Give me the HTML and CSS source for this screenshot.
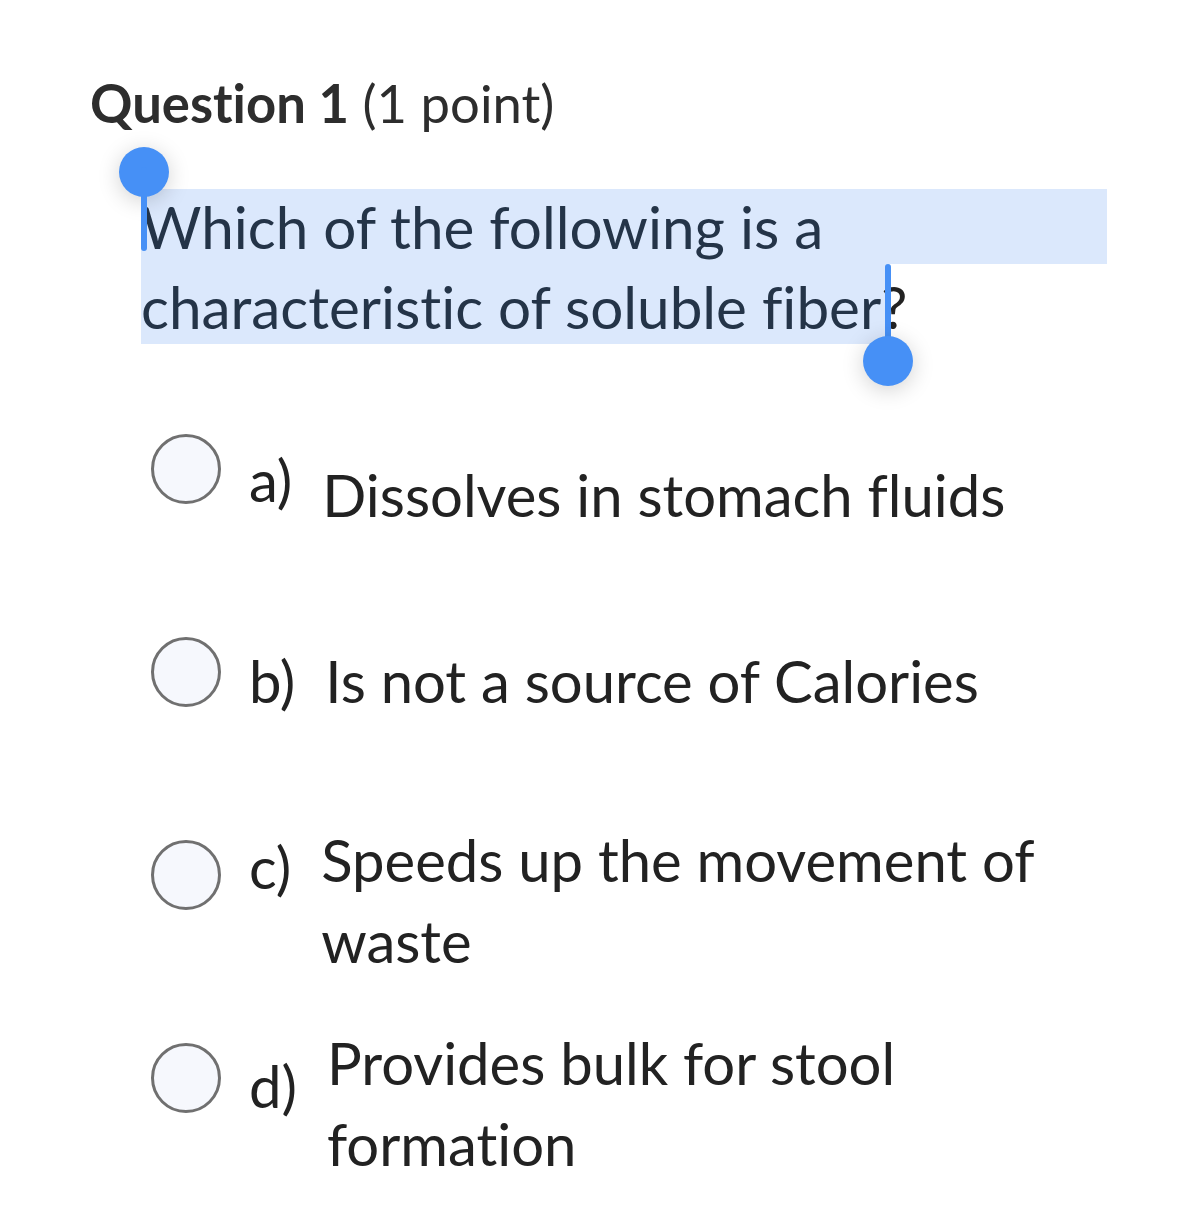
FILE: index.html
```html
<!DOCTYPE html>
<html lang="en">
<head>
<meta charset="utf-8">
<title>Question 1</title>
<link rel="stylesheet" href="styles.css">
</head>
<body>
<main class="quiz">
  <h1 class="q-title"><strong>Question 1</strong> (1 point)</h1>
  <div class="q-text"><span class="handle handle-start"><span class="knob"></span><span class="stem"></span></span><span class="sel">Which of the following is a characteristic of soluble fiber</span>?<span class="handle handle-end"><span class="stem"></span><span class="knob"></span></span></div>
  <ul class="options">
    <li class="option option-a"><span class="radio"></span><span class="label">a)</span><span class="text">Dissolves in stomach fluids</span></li>
    <li class="option option-b"><span class="radio"></span><span class="label">b)</span><span class="text">Is not a source of Calories</span></li>
    <li class="option option-c"><span class="radio"></span><span class="label">c)</span><span class="text">Speeds up the movement of waste</span></li>
    <li class="option option-d"><span class="radio"></span><span class="label">d)</span><span class="text">Provides bulk for stool formation</span></li>
  </ul>
</main>
</body>
</html>
```
FILE: styles.css
```css
html, body {
  margin: 0;
  padding: 0;
  background: #ffffff;
}
body {
  font-family: Lato, "Noto Sans", sans-serif;
  color: #2d2d2d;
  font-variant-ligatures: none;
  font-feature-settings: "liga" 0, "clig" 0, "dlig" 0;
}
.quiz {
  width: 1017px;
  padding: 73px 0 0 90px;
}
.q-title {
  margin: 0;
  font-size: 52.6px;
  line-height: 60px;
  font-weight: 400;
  color: #2d2d2d;
}
.q-title strong {
  font-weight: 700;
}
.q-text {
  position: relative;
  margin: 53px 0 0 51px;
  font-size: 58.4px;
  line-height: 80px;
  color: #222;
  background:
    linear-gradient(#dbe8fc, #dbe8fc) 0 3px / 100% 75px no-repeat,
    linear-gradient(#dbe8fc, #dbe8fc) 0 78px / 746px 80px no-repeat;
}
.sel {
  color: #243448;
}
.handle {
  position: absolute;
  display: block;
}
.handle .knob {
  position: absolute;
  width: 50px;
  height: 50px;
  border-radius: 50%;
  background: #4690f6;
  box-shadow: 0 4px 22px rgba(0, 0, 0, 0.18);
}
.handle .stem {
  position: absolute;
  width: 6px;
  background: #4690f6;
  border-radius: 3px;
}
.handle-start {
  left: 0;
  top: -39px;
}
.handle-start .knob {
  left: -22px;
  top: 0;
}
.handle-start .stem {
  left: 0;
  top: 20px;
  height: 84px;
}
.handle-end {
  left: 744px;
  top: 78px;
}
.handle-end .stem {
  left: 0;
  top: 0;
  height: 90px;
}
.handle-end .knob {
  left: -22px;
  top: 72px;
}
.options {
  list-style: none;
  margin: 74px 0 0 61px;
  padding: 0;
}
.option {
  display: flex;
  align-items: flex-start;
  height: 200px;
  font-size: 58px;
  line-height: 81px;
  color: #222;
}
.radio {
  flex: none;
  width: 64px;
  height: 64px;
  border: 3px solid #707070;
  border-radius: 50%;
  background: #f6f8fd;
}
.label {
  flex: none;
  margin-left: 28px;
}
.text {
  margin-left: 30px;
  flex: 1;
}
.option-a .radio { margin-top: 14px; }
.option-a .label { margin-top: 19px; }
.option-a .text { margin-top: 34px; }
.option-b .radio { margin-top: 17px; }
.option-b .label,
.option-b .text { margin-top: 20px; }
.option-c .radio { margin-top: 20px; }
.option-c .label { margin-top: 6px; }
.option-c .text { margin-top: -1px; }
.option-d .radio { margin-top: 23px; }
.option-d .label { margin-top: 25px; }
.option-d .text { margin-top: 2px; }
```
